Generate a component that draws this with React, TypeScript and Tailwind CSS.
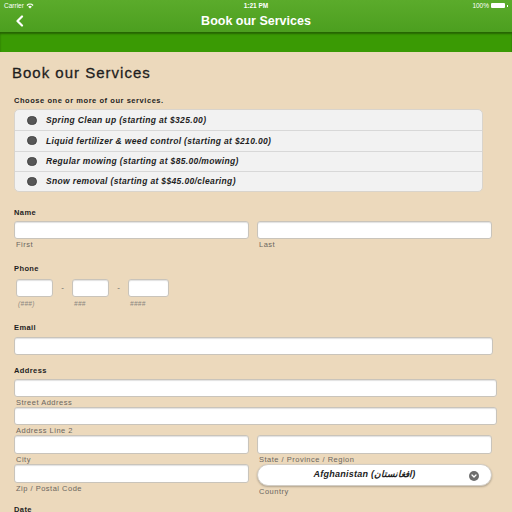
import React from "react";

const services = [
  "Spring Clean up (starting at $325.00)",
  "Liquid fertilizer & weed control (starting at $210.00)",
  "Regular mowing (starting at $85.00/mowing)",
  "Snow removal (starting at $$45.00/clearing)",
];

const inputCls =
  "block bg-white border border-[#c9c4bb] rounded-[3px] shadow-[inset_0_1px_1px_rgba(0,0,0,0.12)]";

const Label = ({ children, className = "" }: { children: React.ReactNode; className?: string }) => (
  <p className={`text-[7.5px] leading-[10px] font-bold tracking-[0.4px] text-[#1e1e1e] ${className}`}>{children}</p>
);

const Sub = ({ children, className = "" }: { children: React.ReactNode; className?: string }) => (
  <p className={`text-[7.5px] leading-[9px] tracking-[0.5px] text-[#6b6660] pl-[2px] ${className}`}>{children}</p>
);

export default function App() {
  return (
    <div className="w-[512px] h-[512px] overflow-hidden bg-[#ecd9bc] font-['Liberation_Sans',Arial,sans-serif]">
      {/* status + nav */}
      <div className="h-[32px] bg-gradient-to-b from-[#5bab2b] to-[#4c9f1f] text-white">
        <div className="h-[11px] flex items-center justify-between px-[4px] text-[6.5px] relative">
          <div className="flex items-center gap-[2px]">
            <span>Carrier</span>
            <svg width="8" height="6" viewBox="0 0 8 6">
              <path d="M0.5 2 A5 5 0 0 1 7.5 2 L6.6 2.9 A3.7 3.7 0 0 0 1.4 2.9 Z" fill="white" />
              <path d="M2.2 3.7 A2.6 2.6 0 0 1 5.8 3.7 L4 5.6 Z" fill="white" />
            </svg>
          </div>
          <span className="absolute left-1/2 -translate-x-1/2 font-bold">1:21 PM</span>
          <div className="flex items-center gap-[2px]">
            <span>100%</span>
            <div className="w-[14px] h-[5px] bg-white rounded-[1px]" />
            <div className="w-[1px] h-[2px] bg-white" />
          </div>
        </div>
        <div className="h-[21px] flex items-center justify-center relative">
          <svg className="absolute left-[15px] top-[4px]" width="9" height="12" viewBox="0 0 9 12">
            <path d="M7 1.5 L2.5 6 L7 10.5" stroke="white" strokeWidth="2.2" fill="none" strokeLinecap="round" strokeLinejoin="round" />
          </svg>
          <span className="text-[12.5px] font-bold">Book our Services</span>
        </div>
      </div>
      <div className="h-[20px] bg-[#3a9a04] shadow-[inset_0_2px_2px_rgba(0,0,0,0.35)]" />

      <div className="pl-[14px]">
        <h1 className="-ml-[2px] mt-[13px] text-[15px] leading-[16px] tracking-[1px] text-[#1e1e1e] [-webkit-text-stroke:0.3px_#1e1e1e]">
          Book our Services
        </h1>
        <p className="mt-[15px] text-[7.5px] leading-[10px] font-bold tracking-[0.55px] text-[#1e1e1e]">
          Choose one or more of our services.
        </p>

        <div className="mt-[3px] w-[469px] rounded-[5px] border border-[#d9d4cc] bg-[#f2f2f2] overflow-hidden">
          {services.map((s, i) => (
            <div
              key={s}
              className={`h-[20.3px] flex items-center ${i > 0 ? "border-t border-[#d8d8d8]" : ""}`}
            >
              <div className="ml-[12px] w-[10px] h-[9px] rounded-full bg-[#575757] border border-[#444]" />
              <span className="ml-[9px] text-[8.5px] font-bold italic tracking-[0.35px] text-[#222]">{s}</span>
            </div>
          ))}
        </div>

        {/* Name */}
        <Label className="mt-[16px]">Name</Label>
        <div className="mt-[3px] flex gap-[8px]">
          <div>
            <div className={`${inputCls} w-[235px] h-[18px]`} />
            <Sub className="mt-[1px]">First</Sub>
          </div>
          <div>
            <div className={`${inputCls} w-[235px] h-[18px]`} />
            <Sub className="mt-[1px] pl-0">Last</Sub>
          </div>
        </div>

        {/* Phone */}
        <Label className="mt-[15px]">Phone</Label>
        <div className="mt-[5px] ml-[2px] flex">
          <div className="w-[37px]">
            <div className={`${inputCls} w-[37px] h-[18px]`} />
            <p className="mt-[2px] pl-[2px] text-[6.5px] leading-[9px] italic tracking-[0.3px] text-[#8a857e]">(###)</p>
          </div>
          <span className="w-[19px] text-center text-[8px] leading-[18px] text-[#666]">-</span>
          <div className="w-[37px]">
            <div className={`${inputCls} w-[37px] h-[18px]`} />
            <p className="mt-[2px] pl-[2px] text-[6.5px] leading-[9px] italic tracking-[0.3px] text-[#8a857e]">###</p>
          </div>
          <span className="w-[19px] text-center text-[8px] leading-[18px] text-[#666]">-</span>
          <div className="w-[41px]">
            <div className={`${inputCls} w-[41px] h-[18px]`} />
            <p className="mt-[2px] pl-[2px] text-[6.5px] leading-[9px] italic tracking-[0.3px] text-[#8a857e]">####</p>
          </div>
        </div>

        {/* Email */}
        <Label className="mt-[15px]">Email</Label>
        <div className={`${inputCls} mt-[4px] w-[479px] h-[18px]`} />

        {/* Address */}
        <Label className="mt-[11px]">Address</Label>
        <div className={`${inputCls} mt-[3px] w-[483px] h-[18px]`} />
        <Sub className="mt-[1px]">Street Address</Sub>
        <div className={`${inputCls} w-[483px] h-[18px]`} />
        <Sub className="mt-[1px]">Address Line 2</Sub>
        <div className="flex gap-[8px]">
          <div>
            <div className={`${inputCls} w-[235px] h-[19px]`} />
            <Sub className="mt-[1px]">City</Sub>
            <div className={`${inputCls} w-[235px] h-[19px]`} />
            <Sub className="mt-[1px]">Zip / Postal Code</Sub>
          </div>
          <div>
            <div className={`${inputCls} w-[235px] h-[19px]`} />
            <Sub className="mt-[1px] pl-0">State / Province / Region</Sub>
            <div className="w-[235px] h-[22px] rounded-[11px] bg-white border border-[#d2cdc5] shadow-[0_1px_2px_rgba(0,0,0,0.25)] flex items-center relative">
              <span className="flex-1 text-center pr-[20px] text-[9px] font-bold italic tracking-[0.25px] text-[#222]">
                Afghanistan (افغانستان)
              </span>
              <div className="absolute right-[12px] top-[5.5px] w-[10px] h-[10px] rounded-full bg-[#6e6e6e] flex items-center justify-center">
                <svg width="6" height="4" viewBox="0 0 6 4">
                  <path d="M1 1 L3 3 L5 1" stroke="white" strokeWidth="1.3" fill="none" strokeLinecap="round" strokeLinejoin="round" />
                </svg>
              </div>
            </div>
            <Sub className="mt-[1px] pl-0">Country</Sub>
          </div>
        </div>

        <Label className="mt-[9px]">Date</Label>
      </div>
    </div>
  );
}
